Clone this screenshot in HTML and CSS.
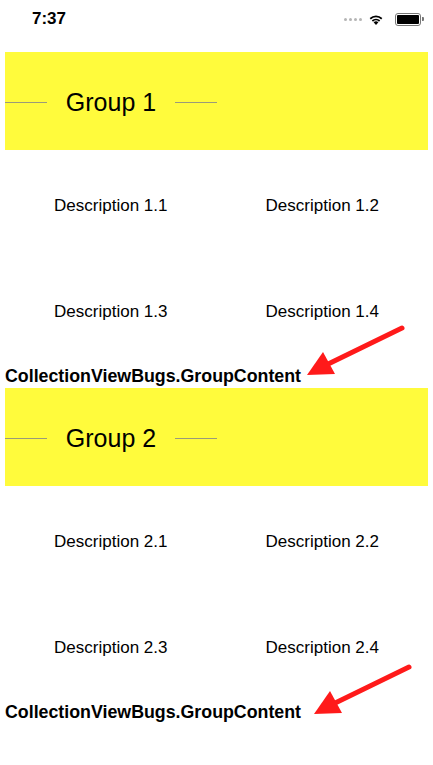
FILE: index.html
```html
<!DOCTYPE html>
<html lang="en">
<head>
  <meta charset="UTF-8" />
  <meta name="viewport" content="width=device-width, initial-scale=1.0"/>
  <title>CollectionViewBugs</title>
  <link rel="stylesheet" href="styles.css">
</head>
<body>
  <div class="status-bar">
    <span class="time">7:37</span>
    <div class="status-icons">
      <span class="signal"><i></i><i></i><i></i><i></i></span>
      <svg class="wifi" width="14" height="11" viewBox="0 0 13 10">
        <path d="M6.5 10 L4.3 7.6 A3.2 3.2 0 0 1 8.7 7.6 Z" fill="#000"/>
        <path d="M2.6 5.8 A5.6 5.6 0 0 1 10.4 5.8 L9.3 7 A4 4 0 0 0 3.7 7 Z" fill="#000"/>
        <path d="M0.6 3.7 A8.6 8.6 0 0 1 12.4 3.7 L11.3 4.9 A7 7 0 0 0 1.7 4.9 Z" fill="#000"/>
      </svg>
      <span class="battery"><span class="battery-level"></span></span>
    </div>
  </div>

  <section class="group">
    <div class="group-header">
      <div class="header-row">
        <span class="rule"></span>
        <span class="group-title">Group 1</span>
        <span class="rule"></span>
      </div>
    </div>
    <div class="items">
      <div class="item">Description 1.1</div>
      <div class="item">Description 1.2</div>
      <div class="item">Description 1.3</div>
      <div class="item">Description 1.4</div>
    </div>
    <div class="type-label">CollectionViewBugs.GroupContent</div>
  </section>

  <section class="group">
    <div class="group-header">
      <div class="header-row">
        <span class="rule"></span>
        <span class="group-title">Group 2</span>
        <span class="rule"></span>
      </div>
    </div>
    <div class="items">
      <div class="item">Description 2.1</div>
      <div class="item">Description 2.2</div>
      <div class="item">Description 2.3</div>
      <div class="item">Description 2.4</div>
    </div>
    <div class="type-label">CollectionViewBugs.GroupContent</div>
  </section>

  <!-- red callout arrows pointing at the stray labels -->
  <svg class="callouts" width="433" height="765" viewBox="0 0 433 765">
    <line x1="402" y1="328" x2="322" y2="367" stroke="#ff1a1a" stroke-width="5" stroke-linecap="round"/>
    <polygon points="307,375 323,352 335,374" fill="#ff1a1a"/>
    <line x1="409" y1="667" x2="329" y2="706" stroke="#ff1a1a" stroke-width="5" stroke-linecap="round"/>
    <polygon points="314,714 330,691 342,713" fill="#ff1a1a"/>
  </svg>
</body>
</html>
```

FILE: styles.css
```css
body {
  margin: 0;
  width: 433px;
  height: 765px;
  background: #fff;
  color: #000;
  font-family: 'Liberation Sans', Arial, sans-serif;
  position: relative;
  overflow: hidden;
}

.status-bar {
  height: 52px;
  display: flex;
  justify-content: space-between;
  align-items: flex-start;
  padding: 0 12px 0 32px;
  box-sizing: border-box;
}

.time {
  font-size: 17px;
  font-weight: bold;
  line-height: 20px;
  margin-top: 9px;
}

.status-icons {
  display: flex;
  align-items: center;
  gap: 7px;
  margin-top: 13px;
}

.signal {
  display: flex;
  gap: 2px;
}

.signal i {
  width: 3px;
  height: 3px;
  border-radius: 50%;
  background: #b5b5b5;
}

.battery {
  position: relative;
  width: 22px;
  height: 9px;
  border: 1px solid #777;
  border-radius: 3px;
  padding: 1px;
  margin-left: 5px;
}

.battery::after {
  content: "";
  position: absolute;
  right: -4px;
  top: 3px;
  width: 2px;
  height: 4px;
  background: #777;
  border-radius: 0 1px 1px 0;
}

.battery-level {
  display: block;
  width: 100%;
  height: 100%;
  background: #000;
  border-radius: 1px;
}

.group {
  padding: 0 5px;
}

.group-header {
  height: 98px;
  background: #fffb3c;
  display: flex;
  align-items: center;
}

.header-row {
  width: 212px;
  display: flex;
  align-items: center;
  margin-top: 2px;
}

.rule {
  flex: 1;
  height: 1px;
  background: #9a9a7a;
}

.group-title {
  font-size: 25px;
  margin: 0 19px;
  line-height: 30px;
}

.items {
  display: grid;
  grid-template-columns: 1fr 1fr;
  grid-auto-rows: 106px;
  padding: 3px 0 1px;
}

.item {
  display: flex;
  align-items: center;
  justify-content: center;
  font-size: 17px;
}

.type-label {
  font-size: 17.8px;
  font-weight: bold;
  line-height: 20px;
  margin-bottom: 2px;
}

.callouts {
  position: absolute;
  left: 0;
  top: 0;
  pointer-events: none;
}
```
